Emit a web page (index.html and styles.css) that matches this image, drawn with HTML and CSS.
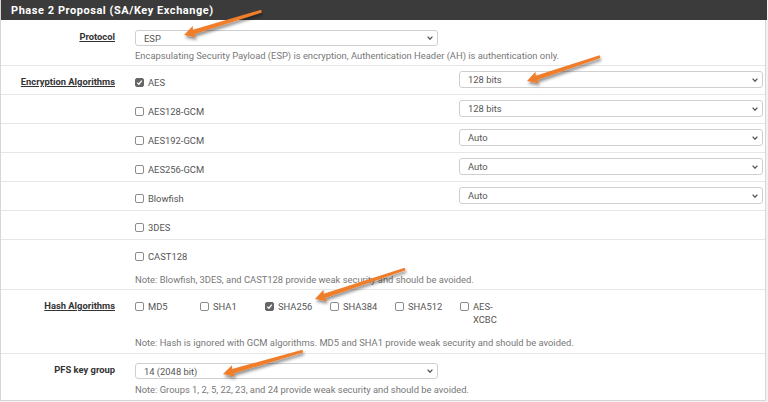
FILE: index.html
```html
<!DOCTYPE html>
<html>
<head>
<meta charset="utf-8">
<link rel="stylesheet" href="styles.css">
</head>
<body>
<div class="panel">
  <div class="panel-heading">Phase 2 Proposal (SA/Key Exchange)</div>

  <div class="row r-protocol">
    <div class="lbl"><span class="u">Protocol</span></div>
    <div class="ctl">
      <div class="select w-half"><span>ESP</span><svg class="chev" width="6" height="4" viewBox="0 0 6 4"><path d="M0.6 0.6 L3 3.2 L5.4 0.6" fill="none" stroke="#555" stroke-width="1.3"/></svg></div>
      <div class="help">Encapsulating Security Payload (ESP) is encryption, Authentication Header (AH) is authentication only.</div>
    </div>
  </div>

  <div class="row r-enc">
    <div class="lbl"><span class="u">Encryption Algorithms</span></div>
    <div class="ctl enc">
      <div class="chk-col"><span class="chk"><span class="box on"><svg width="7" height="7" viewBox="0 0 7 7"><path d="M1.2 3.6 L2.9 5.2 L5.8 1.6" fill="none" stroke="#fff" stroke-width="1.3"/></svg></span>AES</span></div>
      <div class="select w-wide"><span>128 bits</span><svg class="chev" width="6" height="4" viewBox="0 0 6 4"><path d="M0.6 0.6 L3 3.2 L5.4 0.6" fill="none" stroke="#555" stroke-width="1.3"/></svg></div>
    </div>
  </div>

  <div class="row r-enc">
    <div class="lbl"></div>
    <div class="ctl enc">
      <div class="chk-col"><span class="chk"><span class="box"></span>AES128-GCM</span></div>
      <div class="select w-wide"><span>128 bits</span><svg class="chev" width="6" height="4" viewBox="0 0 6 4"><path d="M0.6 0.6 L3 3.2 L5.4 0.6" fill="none" stroke="#555" stroke-width="1.3"/></svg></div>
    </div>
  </div>

  <div class="row r-enc">
    <div class="lbl"></div>
    <div class="ctl enc">
      <div class="chk-col"><span class="chk"><span class="box"></span>AES192-GCM</span></div>
      <div class="select w-wide"><span>Auto</span><svg class="chev" width="6" height="4" viewBox="0 0 6 4"><path d="M0.6 0.6 L3 3.2 L5.4 0.6" fill="none" stroke="#555" stroke-width="1.3"/></svg></div>
    </div>
  </div>

  <div class="row r-enc">
    <div class="lbl"></div>
    <div class="ctl enc">
      <div class="chk-col"><span class="chk"><span class="box"></span>AES256-GCM</span></div>
      <div class="select w-wide"><span>Auto</span><svg class="chev" width="6" height="4" viewBox="0 0 6 4"><path d="M0.6 0.6 L3 3.2 L5.4 0.6" fill="none" stroke="#555" stroke-width="1.3"/></svg></div>
    </div>
  </div>

  <div class="row r-enc">
    <div class="lbl"></div>
    <div class="ctl enc">
      <div class="chk-col"><span class="chk"><span class="box"></span>Blowfish</span></div>
      <div class="select w-wide"><span>Auto</span><svg class="chev" width="6" height="4" viewBox="0 0 6 4"><path d="M0.6 0.6 L3 3.2 L5.4 0.6" fill="none" stroke="#555" stroke-width="1.3"/></svg></div>
    </div>
  </div>

  <div class="row r-enc">
    <div class="lbl"></div>
    <div class="ctl enc">
      <div class="chk-col"><span class="chk"><span class="box"></span>3DES</span></div>
    </div>
  </div>

  <div class="row r-cast">
    <div class="lbl"></div>
    <div class="ctl">
      <div class="chk-col"><span class="chk"><span class="box"></span>CAST128</span></div>
      <div class="help note-cast">Note: Blowfish, 3DES, and CAST128 provide weak security and should be avoided.</div>
    </div>
  </div>

  <div class="row r-hash">
    <div class="lbl"><span class="u">Hash Algorithms</span></div>
    <div class="ctl">
      <div class="hash-list">
        <span class="chk hash"><span class="box"></span><span>MD5</span></span>
        <span class="chk hash"><span class="box"></span><span>SHA1</span></span>
        <span class="chk hash"><span class="box on"><svg width="7" height="7" viewBox="0 0 7 7"><path d="M1.2 3.6 L2.9 5.2 L5.8 1.6" fill="none" stroke="#fff" stroke-width="1.3"/></svg></span><span>SHA256</span></span>
        <span class="chk hash"><span class="box"></span><span>SHA384</span></span>
        <span class="chk hash"><span class="box"></span><span>SHA512</span></span>
        <span class="chk hash last"><span class="box"></span><span class="wrap">AES-XCBC</span></span>
      </div>
      <div class="help note-hash">Note: Hash is ignored with GCM algorithms. MD5 and SHA1 provide weak security and should be avoided.</div>
    </div>
  </div>

  <div class="row r-pfs">
    <div class="lbl">PFS key group</div>
    <div class="ctl">
      <div class="select w-half"><span>14 (2048 bit)</span><svg class="chev" width="6" height="4" viewBox="0 0 6 4"><path d="M0.6 0.6 L3 3.2 L5.4 0.6" fill="none" stroke="#555" stroke-width="1.3"/></svg></div>
      <div class="help note-pfs">Note: Groups 1, 2, 5, 22, 23, and 24 provide weak security and should be avoided.</div>
    </div>
  </div>
</div>

<svg class="arrows" width="768" height="402" viewBox="0 0 768 402">
  <defs>
    <filter id="sh" x="-30%" y="-60%" width="160%" height="220%">
      <feDropShadow dx="1" dy="2.5" stdDeviation="1.8" flood-color="#000" flood-opacity="0.45"/>
    </filter>
  </defs>
  <g filter="url(#sh)">
    <g transform="translate(184 35) rotate(162.9)">
      <polygon points="-81,-1.4 -10,-2.3 -11,-6 0,0 -11,6 -10,2.3 -81,1.4" fill="#f07d2b"/>
    </g>
  </g>
  <g filter="url(#sh)">
    <g transform="translate(527 81) rotate(161.5)">
      <polygon points="-77,-1.4 -10,-2.3 -11,-6 0,0 -11,6 -10,2.3 -77,1.4" fill="#f07d2b"/>
    </g>
  </g>
  <g filter="url(#sh)">
    <g transform="translate(315 299) rotate(161.6)">
      <polygon points="-95,-1.4 -10,-2.3 -11,-6 0,0 -11,6 -10,2.3 -95,1.4" fill="#f07d2b"/>
    </g>
  </g>
  <g filter="url(#sh)">
    <g transform="translate(223 374) rotate(164)">
      <polygon points="-83,-1.4 -10,-2.3 -11,-6 0,0 -11,6 -10,2.3 -83,1.4" fill="#f07d2b"/>
    </g>
  </g>
</svg>
</body>
</html>
```

FILE: styles.css
```css
* { box-sizing: border-box; }
html, body { margin: 0; padding: 0; }
body {
  width: 768px;
  height: 402px;
  overflow: hidden;
  position: relative;
  background: #f2f2f2;
  font-family: Roboto, "Liberation Sans", Arial, sans-serif;
  font-size: 9.4px;
  color: #555;
}
.panel {
  width: 766px;
  background: #fff;
  border: 1px solid #d6d6d6;
  border-top: 0;
}
.panel-heading {
  height: 20px;
  line-height: 21px;
  background: #3b3b3b;
  color: #fff;
  font-weight: 700;
  font-size: 11px;
  letter-spacing: 0.55px;
  padding-left: 10px;
  margin-right: -2px;
}
.row {
  display: flex;
  border-bottom: 1px solid #e6e6e6;
}
.row:last-child { border-bottom: 0; }
.lbl {
  width: 114px;
  flex: none;
  text-align: right;
  font-weight: 700;
  color: #333;
  line-height: 12px;
  padding-top: 10px;
}
.lbl .u { text-decoration: underline; text-underline-offset: 1px; }
.ctl {
  margin-left: 20px;
  flex: 1;
}
.select {
  height: 17px;
  border: 1px solid #cfcfcf;
  border-radius: 3px;
  padding: 0 4px 0 8px;
  display: flex;
  align-items: center;
  justify-content: space-between;
  color: #555;
  background: #fff;
  line-height: 15px;
}
.w-half { width: 303px; }
.w-wide { width: 304px; }
.chev { flex: none; }
.help {
  color: #777;
  line-height: 12px;
  white-space: nowrap;
}
.chk {
  display: inline-flex;
  align-items: center;
  line-height: 13px;
  color: #555;
}
.box {
  width: 9px;
  height: 9px;
  flex: none;
  border: 1px solid #8c8c8c;
  border-radius: 2px;
  margin-right: 4px;
  display: flex;
  align-items: center;
  justify-content: center;
  background: #fff;
}
.box.on { background: #666; border-color: #666; }

/* protocol */
.r-protocol { height: 46px; }
.r-protocol .lbl { padding-top: 11px; }
.r-protocol .select { margin-top: 10px; height: 16px; }
.r-protocol .help { margin-top: 4px; }

/* encryption rows */
.r-enc { height: 29px; }
.enc { display: flex; }
.chk-col { width: 324px; flex: none; padding-top: 10px; }
.enc .select { margin-top: 5px; }

/* cast */
.r-cast { height: 50px; }
.note-cast { margin-top: 11px; }

/* hash */
.r-hash { height: 64px; }
.hash-list { display: flex; padding-top: 10px; }
.hash { width: 65px; align-items: flex-start; }
.hash .box { margin-top: 2px; }
.hash .wrap { width: 36px; }
.note-hash { margin-top: 11px; }

/* pfs */
.r-pfs { height: 46px; }
.r-pfs .select { margin-top: 9px; height: 16px; }
.note-pfs { margin-top: 5px; }

.arrows {
  position: absolute;
  left: 0;
  top: 0;
  pointer-events: none;
}
```
